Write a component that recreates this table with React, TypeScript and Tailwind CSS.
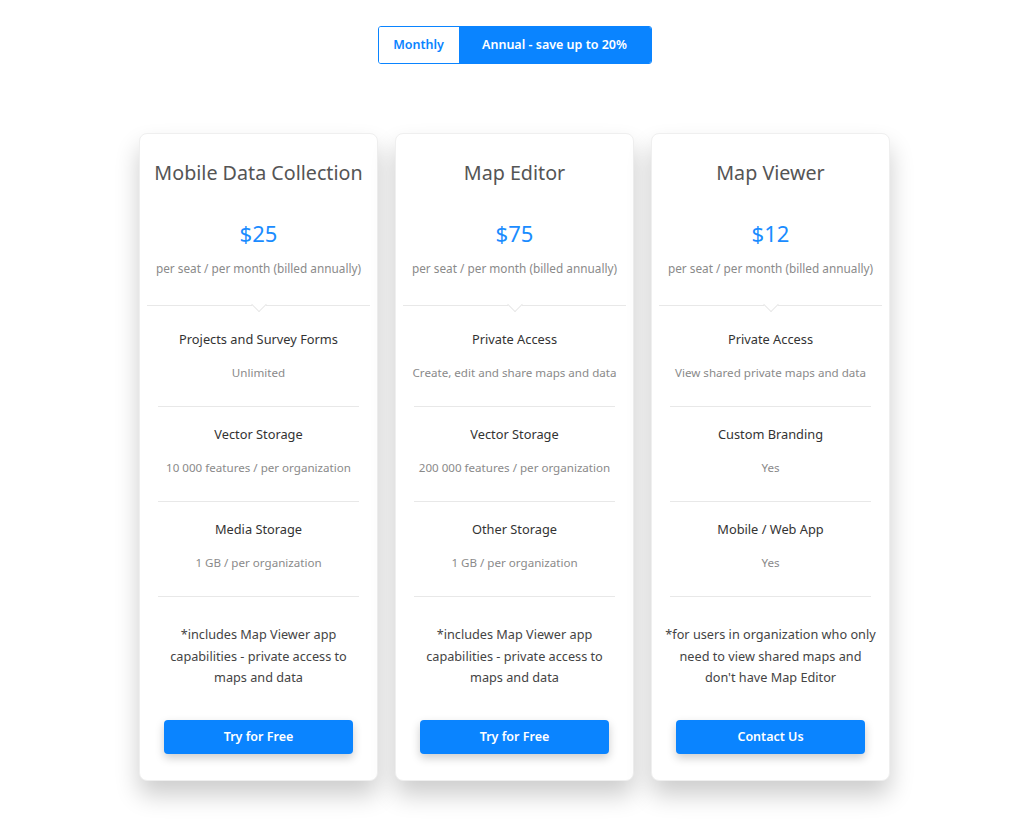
import React from "react";

type Feature = { title: string; value: string };
type Plan = {
  name: string;
  price: string;
  features: Feature[];
  note: string[];
  cta: string;
};

const plans: Plan[] = [
  {
    name: "Mobile Data Collection",
    price: "$25",
    features: [
      { title: "Projects and Survey Forms", value: "Unlimited" },
      { title: "Vector Storage", value: "10 000 features / per organization" },
      { title: "Media Storage", value: "1 GB / per organization" },
    ],
    note: ["*includes Map Viewer app", "capabilities - private access to", "maps and data"],
    cta: "Try for Free",
  },
  {
    name: "Map Editor",
    price: "$75",
    features: [
      { title: "Private Access", value: "Create, edit and share maps and data" },
      { title: "Vector Storage", value: "200 000 features / per organization" },
      { title: "Other Storage", value: "1 GB / per organization" },
    ],
    note: ["*includes Map Viewer app", "capabilities - private access to", "maps and data"],
    cta: "Try for Free",
  },
  {
    name: "Map Viewer",
    price: "$12",
    features: [
      { title: "Private Access", value: "View shared private maps and data" },
      { title: "Custom Branding", value: "Yes" },
      { title: "Mobile / Web App", value: "Yes" },
    ],
    note: ["*for users in organization who only", "need to view shared maps and", "don't have Map Editor"],
    cta: "Contact Us",
  },
];

function Card({ plan }: { plan: Plan }) {
  return (
    <div className="w-[239px] h-[648px] bg-white rounded-[8px] border border-[#efefef] shadow-[0_14px_24px_rgba(0,0,0,0.2)] flex flex-col items-center pt-[27px]">
      <div className="text-[19.7px] leading-[24px] text-[#555] whitespace-nowrap">{plan.name}</div>
      <div className="mt-[34px] text-[22px] leading-[28px] text-[#1a8cff]">{plan.price}</div>
      <div className="mt-[13px] text-[11.8px] leading-[16px] text-[#8a8a8a] whitespace-nowrap">
        per seat / per month (billed annually)
      </div>
      <div className="mt-[29px] w-full px-[7px]">
        <div className="relative h-px bg-[#e8e8e8]">
          <div className="absolute left-1/2 -translate-x-1/2 -top-[6px] w-[11px] h-[11px] rotate-45 bg-white border-r border-b border-[#e8e8e8]" />
        </div>
      </div>
      <div className="w-full px-[18px] flex flex-col">
        {plan.features.map((f, i) => (
          <div
            key={i}
            className={`flex flex-col items-center border-b border-[#e8e8e8] pb-[25px] ${i === 0 ? "pt-[24px]" : "pt-[18px]"}`}
          >
            <div className="text-[12.8px] leading-[18px] text-[#333] whitespace-nowrap">{f.title}</div>
            <div className="mt-[17px] text-[11.6px] leading-[16px] text-[#8a8a8a] whitespace-nowrap">{f.value}</div>
          </div>
        ))}
      </div>
      <div className="mt-[27px] text-[12.7px] leading-[21.5px] text-[#444] text-center">
        {plan.note.map((l, i) => (
          <div key={i} className="whitespace-nowrap">
            {l}
          </div>
        ))}
      </div>
      <button className="mt-[31px] w-[189px] h-[34px] pt-[2px] rounded-[4px] bg-[#0a84ff] text-white text-[12.5px] font-semibold shadow-[0_4px_10px_rgba(0,0,0,0.2)]">
        {plan.cta}
      </button>
    </div>
  );
}

export default function App() {
  return (
    <div
      className="w-[1024px] h-[836px] bg-white flex flex-col items-center pl-[5px]"
      style={{ fontFamily: '"Noto Sans", "Open Sans", sans-serif' }}
    >
      <div className="mt-[26px] flex h-[38px] rounded-[3px] border border-[#0a84ff] overflow-hidden">
        <div className="w-[80px] flex items-center justify-center bg-white text-[#0a84ff] text-[12.5px] font-semibold">
          Monthly
        </div>
        <div className="w-[192px] flex items-center justify-center bg-[#0a84ff] text-white text-[12.5px] font-semibold">
          Annual - save up to 20%
        </div>
      </div>
      <div className="mt-[69px] flex gap-[17px]">
        {plans.map((p, i) => (
          <Card key={i} plan={p} />
        ))}
      </div>
    </div>
  );
}
